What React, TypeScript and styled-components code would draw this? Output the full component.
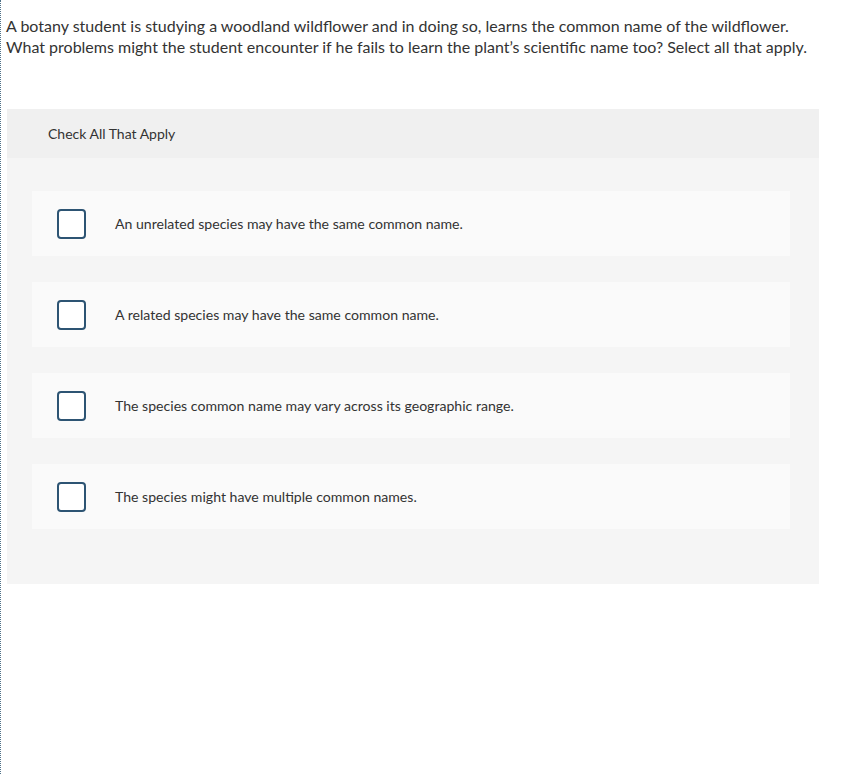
import { createGlobalStyle, styled } from 'styled-components'

const GlobalStyle = createGlobalStyle`
  html, body {
    margin: 0;
    padding: 0;
    background: #ffffff;
  }
  body {
    font-family: Lato, "Open Sans", sans-serif;
    color: #333333;
  }
`

const Page = styled.div`
  min-height: 774px;
  box-sizing: border-box;
  border-left: 1px dotted #4f7188;
  padding: 15px 0 0 5px;
`

const Question = styled.p`
  margin: 0;
  font-size: 16px;
  line-height: 21px;
  color: #333333;
`

const Panel = styled.section`
  width: 812px;
  margin: 52px 0 0 1px;
  background: #f5f5f5;
`

const PanelHeader = styled.div`
  height: 49px;
  display: flex;
  align-items: center;
  padding-left: 41px;
  background: #f0f0f0;
  font-size: 14px;
  color: #333333;
`

const OptionList = styled.div`
  display: flex;
  flex-direction: column;
  gap: 26px;
  padding: 33px 29px 55px 25px;
`

const Option = styled.label`
  height: 65px;
  display: flex;
  align-items: center;
  gap: 29px;
  padding-left: 25px;
  background: #fafafa;
  font-size: 14.1px;
  color: #333333;
  cursor: pointer;
`

const Box = styled.span`
  flex-shrink: 0;
  width: 29px;
  height: 30px;
  box-sizing: border-box;
  border: 2px solid #2d5473;
  border-radius: 4px;
  background: #ffffff;
`

const options = [
  'An unrelated species may have the same common name.',
  'A related species may have the same common name.',
  'The species common name may vary across its geographic range.',
  'The species might have multiple common names.'
]

export default function App() {
  return (
    <>
      <GlobalStyle />
      <Page>
        <Question>
          A botany student is studying a woodland wildflower and in doing so,
          learns the common name of the wildflower.
          <br />
          What problems might the student encounter if he fails to learn the
          plant’s scientific name too? Select all that apply.
        </Question>
        <Panel>
          <PanelHeader>Check All That Apply</PanelHeader>
          <OptionList>
            {options.map((text) => (
              <Option key={text}>
                <Box />
                <span>{text}</span>
              </Option>
            ))}
          </OptionList>
        </Panel>
      </Page>
    </>
  )
}
